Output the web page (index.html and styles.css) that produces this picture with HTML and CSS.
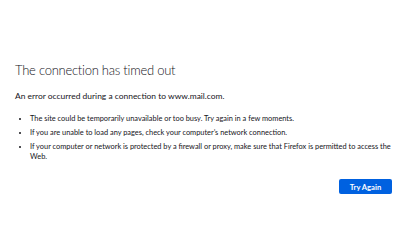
FILE: index.html
```html
<!DOCTYPE html>
<html>
<head>
<meta charset="utf-8">
<link rel="stylesheet" href="styles.css">
</head>
<body>
<main class="page">
  <h1 class="title">The connection has timed out</h1>
  <p class="desc">An error occurred during a connection to www.mail.com.</p>
  <ul class="list">
    <li>The site could be temporarily unavailable or too busy. Try again in a few moments.</li>
    <li>If you are unable to load any pages, check your computer’s network connection.</li>
    <li>If your computer or network is protected by a firewall or proxy, make sure that Firefox is permitted to access the Web.</li>
  </ul>
  <div class="actions">
    <button class="btn">Try Again</button>
  </div>
</main>
</body>
</html>
```
FILE: styles.css
```css
html, body {
  margin: 0;
  padding: 0;
  background: #ffffff;
}
body {
  font-family: "Lato", "Open Sans", sans-serif;
  color: #15141a;
}
.page {
  padding: 61px 19px 0 15px;
  width: 377px;
}
.title {
  margin: 0;
  font-size: 13px;
  font-weight: 300;
  letter-spacing: -0.25px;
  line-height: 18px;
  color: #15141a;
}
.desc {
  margin: 11px 0 0 0;
  font-size: 8.45px;
  line-height: 12px;
}
.list {
  margin: 12px 0 0 0;
  padding-left: 15px;
  font-size: 7.4px;
  line-height: 10px;
}
.list li {
  margin-bottom: 4px;
}
.actions {
  display: flex;
  justify-content: flex-end;
  margin-top: 17px;
}
.btn {
  background: #0061e0;
  color: #ffffff;
  border: none;
  border-radius: 2px;
  font-family: "Lato", "Open Sans", sans-serif;
  font-weight: 700;
  font-size: 7.6px;
  width: 53px;
  height: 15px;
  padding: 0;
}
```
